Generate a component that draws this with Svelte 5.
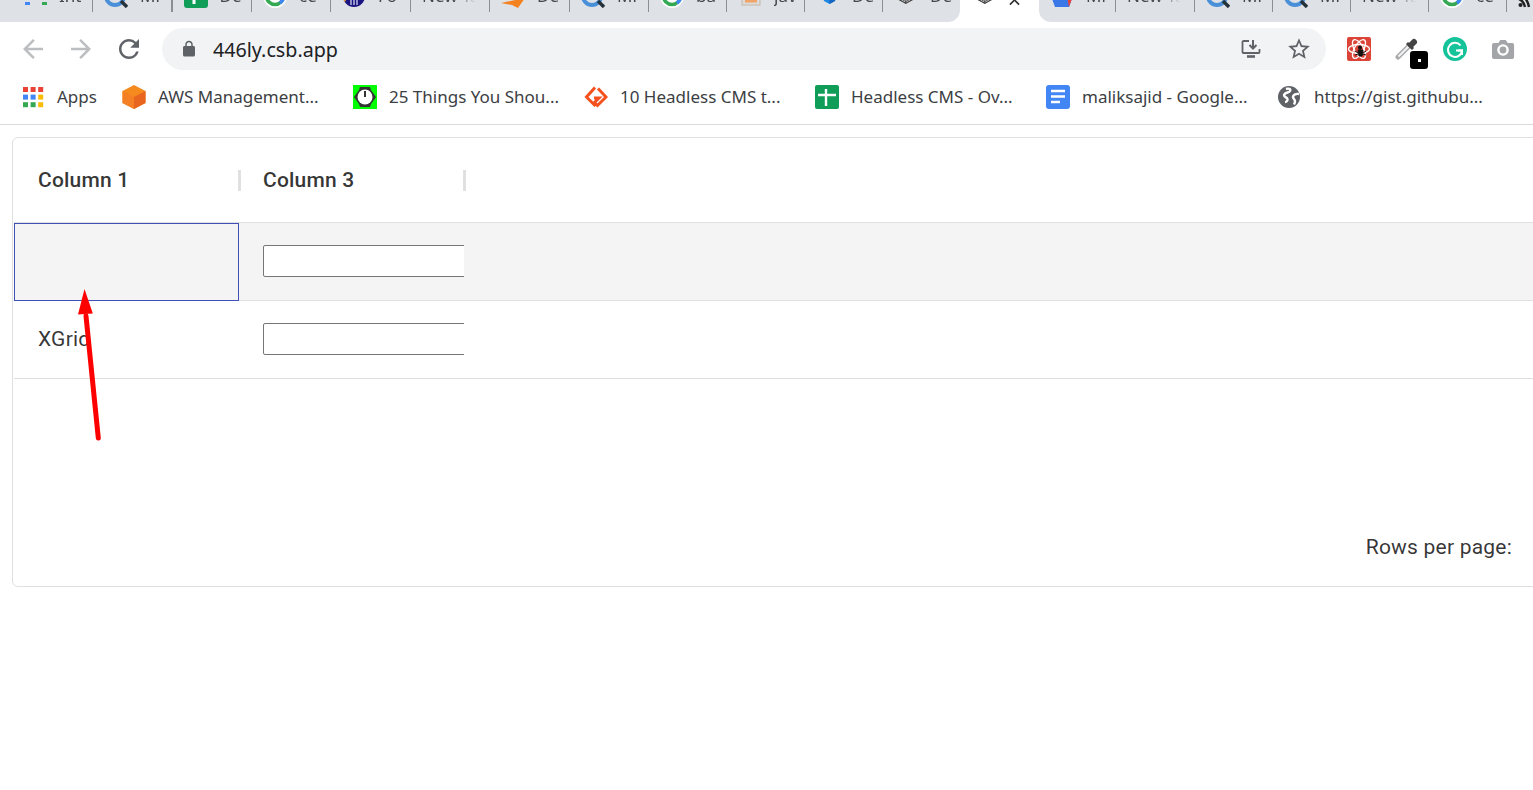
<script lang="ts">
	const tabs = [
		{ width: 93, icon: 'dots', label: 'Int' },
		{ width: 79.5, icon: 'search', label: 'Mi' },
		{ width: 79.5, icon: 'sheet', label: 'De' },
		{ width: 79, icon: 'chrome', label: 'ce' },
		{ width: 80, icon: 'navy', label: 'Fo' },
		{ width: 79, icon: '', label: 'New Tab' },
		{ width: 80, icon: 'wedge', label: 'De' },
		{ width: 79, icon: 'search', label: 'Mi' },
		{ width: 78, icon: 'chrome', label: 'ba' },
		{ width: 78, icon: 'doc', label: 'jav' },
		{ width: 78, icon: 'shield', label: 'De' },
		{ width: 77, icon: 'cube', label: 'De', last: true },
		{ width: 79, icon: 'cube', label: '', active: true },
		{ width: 77, icon: 'gem', label: 'Mi' },
		{ width: 79, icon: '', label: 'New Tab' },
		{ width: 78, icon: 'search', label: 'Mi' },
		{ width: 78, icon: 'search', label: 'Mi' },
		{ width: 78, icon: '', label: 'New Tab' },
		{ width: 78, icon: 'chrome', label: 'ce' },
		{ width: 40, icon: 'wifi', label: '' }
	];

	const bookmarks = [
		{ width: 99, icon: 'apps', label: 'Apps' },
		{ width: 231, icon: 'aws', label: 'AWS Management...' },
		{ width: 231, icon: 'clock', label: '25 Things You Shou...' },
		{ width: 231, icon: 'cms', label: '10 Headless CMS t...' },
		{ width: 231, icon: 'sheet', label: 'Headless CMS - Ov...' },
		{ width: 232, icon: 'docs', label: 'maliksajid - Google...' },
		{ width: 220, icon: 'globe', label: 'https://gist.githubu...' }
	];

	const rows = [
		{ name: '', focused: true, shaded: true },
		{ name: 'XGrid', focused: false, shaded: false }
	];
</script>

{#snippet favicon(kind)}
	<svg class="favicon" viewBox="0 0 24 24" aria-hidden="true">
		{#if kind === 'dots'}
			<rect x="2" y="18" width="5" height="3" fill="#4285f4" />
			<rect x="19" y="18" width="5" height="3" fill="#34a853" />
		{:else if kind === 'search'}
			<circle cx="11" cy="12" r="9" fill="none" stroke="#4a90d9" stroke-width="4" />
			<path d="M17 17l6 6" stroke="#26323a" stroke-width="3.4" />
		{:else if kind === 'sheet'}
			<rect width="24" height="24" rx="3" fill="#0f9d58" />
			<path d="M4 10h16M10 5v15" stroke="#fff" stroke-width="3" />
		{:else if kind === 'chrome'}
			<circle cx="12" cy="12" r="12" fill="#fff" />
			<circle cx="12" cy="12" r="8.5" fill="none" stroke="#34a853" stroke-width="3.6" />
			<path d="M20.5 12a8.5 8.5 0 0 1-3.5 7" fill="none" stroke="#4285f4" stroke-width="3.6" />
		{:else if kind === 'navy'}
			<circle cx="12" cy="12" r="11" fill="#1b1480" />
			<path d="M9 21v-5M12 21v-6M15 21v-7" stroke="#dfe1f5" stroke-width="1.2" />
			<path d="M0 14h5l-2 4z" fill="#e8a23c" />
		{:else if kind === 'wedge'}
			<path d="M0 19L24 14 17 24 11 21z" fill="#f58220" />
		{:else if kind === 'doc'}
			<rect x="4" y="2" width="18" height="19" fill="#dcdcdc" stroke="#c5b8a8" />
			<rect x="7" y="14" width="12" height="4.500" fill="#f1a468" />
		{:else if kind === 'shield'}
			<path d="M6 8h15l-2 9-5.500 3-5.500-3z" fill="#1e88e5" />
			<path d="M13.500 8H21l-2 9-5.500 3z" fill="#1565c0" />
		{:else if kind === 'cube'}
			<g transform="translate(3 0) scale(.88)">
				<path d="M1 7l9-5 9 5v10l-9 5-9-5z" fill="#fff" stroke="#444" stroke-width="1.400" />
				<path d="M1 15l9 5 9-5M10 10v12M5 12v7M15 12v7" fill="none" stroke="#444" stroke-width="1.100" />
			</g>
		{:else if kind === 'gem'}
			<path d="M1 12h22l-4 11H5z" fill="#3a78e7" />
			<path d="M17 12h6l-4 11z" fill="#ea4335" />
		{:else if kind === 'wifi'}
			<path d="M1 10c4 1 9 6 10 13M1 15c3 1 5 4 6 8" fill="none" stroke="#222" stroke-width="2.4" />
			<circle cx="2.5" cy="21" r="2" fill="#222" />
		{/if}
	</svg>
{/snippet}

{#snippet markIcon(kind)}
	<svg class="mark" viewBox="0 0 24 24" aria-hidden="true">
		{#if kind === 'apps'}
			{#each ['#ea4335', '#ea4335', '#ea4335', '#4285f4', '#4285f4', '#fbbc05', '#34a853', '#34a853', '#fbbc05'] as fill, i}
				<rect x={i % 3 * 7.6} y={Math.floor(i / 3) * 7.6 + 2} width="5" height="5" {fill} />
			{/each}
		{:else if kind === 'aws'}
			<path d="M12 0l11.500 6v12L12 24 .5 18V6z" fill="#f58a1f" />
			<path d="M12 12l11.500-6v12L12 24z" fill="#e8651f" />
			<path d="M.5 6L12 12v12L.5 18z" fill="#f47f24" />
		{:else if kind === 'clock'}
			<rect width="24" height="24" fill="#00ff00" />
			<path d="M7 2h10l1 3 5 7-5 7-1 3H7l-1-3-5-7 5-7z" fill="#333" />
			<circle cx="12" cy="12" r="7.500" fill="#fff" />
			<path d="M12 6v6" stroke="#333" stroke-width="2" />
		{:else if kind === 'cms'}
			<path d="M11 2.500L2.500 12l9 9M14 3.500l8 8.500-8.500 8.500-3-3 4.500-4.500h-5" fill="none" stroke="#f4511e" stroke-width="3" />
		{:else if kind === 'sheet'}
			<rect width="24" height="24" rx="2" fill="#0f9d58" />
			<path d="M3 10h18M11 4v17" stroke="#fff" stroke-width="2.400" />
		{:else if kind === 'docs'}
			<rect width="24" height="24" rx="3" fill="#4285f4" />
			<path d="M5 6h14M5 11.500h14M5 17h9" stroke="#fff" stroke-width="2.500" />
		{:else if kind === 'globe'}
			<circle cx="11" cy="12" r="11" fill="#5f6368" />
			<path d="M8 4c3-1 5 0 4 2-1 2-5 1-6 4-.5 2 3 2 3.500 4 .2 2-1 3-2.500 3" fill="none" stroke="#fff" stroke-width="2.400" />
			<path d="M21 9c-3-.5-5 .5-6 2.500-.5 2 2 2.500 2 5 0 1-.5 2-1 3" fill="none" stroke="#fff" stroke-width="2.400" />
		{/if}
	</svg>
{/snippet}

<div class="screen">
	<div class="tabstrip">
		{#each tabs as tab, i}
			<div
				class="tab"
				class:first={i === 0}
				class:active={tab.active}
				class:no-rule={tab.last || tab.active}
				class:before-active={tab.last}
				class:after-active={tabs[i - 1]?.active}
				style="width: {tab.width}px"
			>
				<div class="tab-inner">
					{#if tab.icon}
						{@render favicon(tab.icon)}
					{/if}
					{#if tab.label}
						<span class="tab-label">{tab.label}</span>
					{/if}
					{#if tab.active}
						<svg class="tab-close" viewBox="0 0 12 12" aria-hidden="true">
							<path d="M1 1l10 10M11 1L1 11" stroke="#333" stroke-width="1.800" />
						</svg>
					{/if}
				</div>
			</div>
		{/each}
	</div>

	<div class="toolbar">
		<button class="nav" aria-label="Back">
			<svg viewBox="0 0 24 24"><path class="dim" d="M20 11H7.830l5.590-5.590L12 4l-8 8 8 8 1.410-1.410L7.830 13H20v-2z" /></svg>
		</button>
		<button class="nav" aria-label="Forward">
			<svg viewBox="0 0 24 24"><path class="dim" d="M4 11h12.170l-5.590-5.590L12 4l8 8-8 8-1.410-1.410L16.170 13H4v-2z" /></svg>
		</button>
		<button class="nav" aria-label="Reload">
			<svg viewBox="0 0 24 24"><path d="M17.650 6.350A7.958 7.958 0 0 0 12 4c-4.420 0-7.990 3.580-7.990 8s3.570 8 7.990 8c3.730 0 6.840-2.550 7.730-6h-2.080A5.990 5.990 0 0 1 12 18c-3.310 0-6-2.690-6-6s2.690-6 6-6c1.660 0 3.140.690 4.220 1.780L13 11h7V4l-2.350 2.350z" /></svg>
		</button>

		<div class="omnibox">
			<svg class="lock" viewBox="0 0 24 24" aria-hidden="true">
				<path fill-rule="evenodd" d="M18 8h-1V6c0-2.760-2.240-5-5-5S7 3.240 7 6v2H6c-1.100 0-2 .9-2 2v10c0 1.100.9 2 2 2h12c1.100 0 2-.9 2-2V10c0-1.100-.9-2-2-2zM9 6c0-1.660 1.340-3 3-3s3 1.340 3 3v2H9V6z" />
			</svg>
			<span class="url">446ly.csb.app</span>
			<svg class="install" viewBox="0 0 20 20" aria-hidden="true">
				<path d="M8 2H2.500a1 1 0 0 0-1 1v10a1 1 0 0 0 1 1h15a1 1 0 0 0 1-1v-3" fill="none" stroke="#5f6368" stroke-width="1.800" />
				<path d="M12 1v7.500M8.500 6l3.500 3.500L15.500 6" fill="none" stroke="#5f6368" stroke-width="2" />
				<path d="M6 17.500h8" stroke="#5f6368" stroke-width="2.600" />
			</svg>
			<svg class="star" viewBox="0 0 24 24" aria-hidden="true">
				<path fill-rule="evenodd" d="M22 9.240l-7.190-.62L12 2 9.190 8.630 2 9.240l5.460 4.730L5.820 21 12 17.270 18.180 21l-1.630-7.030L22 9.240zM12 15.400l-3.760 2.270 1-4.280-3.320-2.880 4.380-.38L12 6.100l1.710 4.040 4.380.38-3.320 2.880 1 4.280L12 15.400z" />
			</svg>
		</div>

		<div class="extensions">
			<div class="ext">
				<svg viewBox="0 0 24 24" aria-hidden="true">
					<rect width="24" height="24" rx="2" fill="#db4437" />
					<g fill="none" stroke="#fff" stroke-width="1.300">
						<ellipse cx="12" cy="12" rx="10.500" ry="4.500" />
						<ellipse cx="12" cy="12" rx="10.500" ry="4.500" transform="rotate(60 12 12)" />
						<ellipse cx="12" cy="12" rx="10.500" ry="4.500" transform="rotate(120 12 12)" />
					</g>
					<circle cx="13" cy="10.500" r="2" fill="#111" />
					<path d="M11 13h5l-1 6h-3zM8 14l3 2M8 18l3-1M19 14l-3 2M19 18l-3-1" fill="#111" stroke="#111" />
				</svg>
			</div>
			<div class="ext dropper">
				<svg viewBox="0 0 24 24" aria-hidden="true">
					<path d="M3 20L14 9" stroke="#a9abad" stroke-width="5" stroke-linecap="round" />
					<path d="M3.500 19.500L14 9" stroke="#f2f2f2" stroke-width="2" />
					<path d="M12 6l6 6" stroke="#444" stroke-width="3" />
					<path d="M16 8l3-3" stroke="#444" stroke-width="6" stroke-linecap="round" />
				</svg>
				<span class="dropper-badge"><i></i></span>
			</div>
			<div class="ext">
				<svg viewBox="0 0 24 24" aria-hidden="true">
					<circle cx="12" cy="12" r="12" fill="#15c39a" />
					<path d="M17.500 8.500A7 7 0 1 0 19 13.500h-6" fill="none" stroke="#fff" stroke-width="2" />
					<path d="M19 18v-4.500h-4" fill="none" stroke="#fff" stroke-width="2" />
				</svg>
			</div>
			<div class="ext">
				<svg viewBox="0 0 24 24" aria-hidden="true">
					<path d="M2 6h5l2-3h6l2 3h5a2 2 0 0 1 2 2v12a2 2 0 0 1-2 2H2a2 2 0 0 1-2-2V8a2 2 0 0 1 2-2z" transform="translate(1 0) scale(.92 1)" fill="#a3a5a8" />
					<circle cx="12" cy="13" r="5.800" fill="#fff" />
					<circle cx="12" cy="13" r="3.400" fill="#a3a5a8" />
				</svg>
			</div>
		</div>
	</div>

	<div class="bookmarks">
		{#each bookmarks as mark}
			<div class="bookmark" style="width: {mark.width}px">
				{@render markIcon(mark.icon)}
				<span>{mark.label}</span>
			</div>
		{/each}
	</div>

	<div class="grid-card">
		<div class="grid-row grid-head">
			<div class="head-cell"><span>Column 1</span><i class="sep"></i></div>
			<div class="head-cell"><span>Column 3</span><i class="sep"></i></div>
		</div>
		{#each rows as row}
			<div class="grid-row body-row" class:shaded={row.shaded}>
				<div class="cell name-cell" class:focused={row.focused}>{row.name}</div>
				<div class="cell input-cell"><input type="text" aria-label="Column 3" /></div>
			</div>
		{/each}
		<div class="grid-footer">Rows per page:</div>
	</div>

	<!-- annotation drawn over the screenshot -->
	<svg class="arrow" viewBox="0 0 40 160" aria-hidden="true">
		<path d="M23.300 152L11 30" stroke="#ff0000" stroke-width="5" stroke-linecap="round" />
		<path d="M9.500 3L3 28.500 17.800 27.500z" fill="#ff0000" />
	</svg>
</div>

<style>
	:global(body) {
		margin: 0;
		background: #fff;
	}

	.screen {
		position: relative;
		width: 1533px;
		height: 790px;
		overflow: hidden;
		background: #fff;
		font-family: 'Noto Sans', 'Open Sans', sans-serif;
	}

	.tabstrip {
		display: flex;
		height: 22px;
		overflow: hidden;
		background: #fff;
	}

	.tab {
		position: relative;
		flex: none;
		box-sizing: border-box;
		height: 22px;
		padding-left: 11px;
		overflow: hidden;
		background: #dee1e6;
	}

	.tab.first {
		padding-left: 23px;
	}

	.tab.active {
		background: #fff;
		padding-left: 13px;
	}

	.tab.before-active {
		border-bottom-right-radius: 12px;
	}

	.tab.after-active {
		border-bottom-left-radius: 12px;
	}

	.tab::after {
		content: '';
		position: absolute;
		top: 0;
		right: 0;
		width: 1.500px;
		height: 12px;
		background: #8b8e93;
	}

	.tab.no-rule::after {
		display: none;
	}

	.tab-inner {
		display: flex;
		align-items: center;
		gap: 12px;
		height: 24px;
		margin-top: -16px;
	}

	.favicon {
		flex: none;
		width: 24px;
		height: 24px;
	}

	.tab-label {
		font-size: 17px;
		line-height: 24px;
		color: #45474a;
		white-space: nowrap;
		-webkit-mask-image: linear-gradient(to right, #000 30px, transparent 54px);
		mask-image: linear-gradient(to right, #000 30px, transparent 54px);
	}

	.tab-close {
		width: 11px;
		height: 12px;
		margin-top: 8px;
	}

	.toolbar {
		display: flex;
		align-items: center;
		box-sizing: border-box;
		height: 50px;
		padding: 6px 0 2px 9px;
	}

	.nav {
		display: flex;
		align-items: center;
		justify-content: center;
		width: 48px;
		height: 42px;
		padding: 0;
		border: 0;
		background: none;
	}

	.nav svg {
		width: 30px;
		height: 30px;
		fill: #5f6368;
	}

	.nav .dim {
		fill: #bcbec2;
	}

	.omnibox {
		display: flex;
		align-items: center;
		flex: none;
		box-sizing: border-box;
		width: 1164px;
		height: 42px;
		margin-left: 9px;
		padding-left: 18px;
		border-radius: 21px;
		background: #f1f3f4;
	}

	.lock {
		flex: none;
		width: 18px;
		height: 18px;
		fill: #5f6368;
	}

	.url {
		margin-left: 15px;
		font-size: 19.700px;
		color: #202124;
	}

	.install {
		flex: none;
		width: 20px;
		height: 20px;
		margin-left: auto;
	}

	.star {
		flex: none;
		width: 26px;
		height: 26px;
		margin: 0 14px 0 25px;
		fill: #5f6368;
	}

	.extensions {
		display: flex;
		margin-left: 9px;
	}

	.ext {
		position: relative;
		display: flex;
		align-items: center;
		justify-content: center;
		width: 48px;
	}

	.ext svg {
		width: 24px;
		height: 24px;
	}

	.dropper-badge {
		position: absolute;
		top: 14px;
		left: 27px;
		display: flex;
		align-items: center;
		justify-content: center;
		width: 18px;
		height: 18px;
		border-radius: 3px;
		background: #000;
	}

	.dropper-badge i {
		width: 3px;
		height: 3px;
		background: #fff;
	}

	.bookmarks {
		display: flex;
		align-items: center;
		box-sizing: border-box;
		height: 53px;
		padding: 0 0 3px 23px;
		border-bottom: 1px solid #dadada;
	}

	.bookmark {
		display: flex;
		align-items: center;
		flex: none;
		gap: 12px;
		font-size: 17px;
		color: #3c4043;
		white-space: nowrap;
	}

	.bookmark span {
		margin-top: -1px;
	}

	.bookmark:first-child {
		gap: 10px;
	}

	.mark {
		flex: none;
		width: 24px;
		height: 24px;
	}

	.grid-card {
		box-sizing: border-box;
		width: 1551px;
		margin: 12px 0 0 12px;
		padding-left: 1px;
		border: 1px solid #e0e0e0;
		border-radius: 6px;
		font-family: Roboto, sans-serif;
		font-size: 21px;
		letter-spacing: 0.214px;
		color: rgba(0, 0, 0, 0.8);
	}

	.grid-row {
		display: grid;
		grid-template-columns: 225px 225px 1fr;
		border-bottom: 1px solid #e0e0e0;
	}

	.grid-head {
		height: 85px;
		box-sizing: border-box;
	}

	.head-cell {
		display: flex;
		align-items: center;
		justify-content: space-between;
		padding-left: 24px;
		font-weight: 500;
	}

	.sep {
		width: 3px;
		height: 21px;
		margin-right: -2px;
		background: #e0e0e0;
	}

	.body-row {
		height: 78px;
		box-sizing: border-box;
	}

	.shaded {
		background: #f4f4f4;
	}

	.cell {
		display: flex;
		align-items: center;
		padding-left: 24px;
		padding-bottom: 1px;
		overflow: hidden;
	}

	.focused {
		margin-bottom: -1px;
		outline: 1px solid #3f51b5;
		outline-offset: -1px;
	}

	input {
		flex: none;
		box-sizing: border-box;
		width: 240px;
		height: 32px;
		padding: 1px 2px;
		border: 1px solid #767676;
		border-radius: 2px;
		background: #fff;
	}

	.grid-footer {
		display: flex;
		align-items: flex-end;
		justify-content: flex-end;
		box-sizing: border-box;
		height: 207px;
		padding: 0 50px 24px 0;
		line-height: 28.600px;
	}

	.arrow {
		position: absolute;
		top: 286px;
		left: 75px;
		width: 40px;
		height: 160px;
	}
</style>
